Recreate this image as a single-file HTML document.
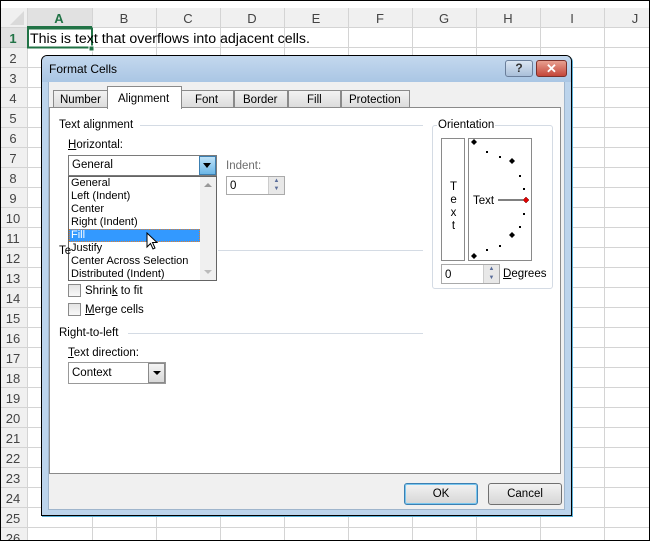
<!DOCTYPE html>
<html><head><style>
*{box-sizing:border-box;margin:0;padding:0}
body{width:650px;height:541px;overflow:hidden;background:#fff;font-family:"Liberation Sans",sans-serif;position:relative}
.a{position:absolute}
.t{position:absolute;font-size:11.5px;color:#000;white-space:nowrap;line-height:14px}
.hl{position:absolute;height:1px;background:#d4dbe4}
</style></head><body>
<div class="a" style="left:0;top:0;width:650px;height:541px;border:1px solid #000;z-index:50;pointer-events:none"></div>
<svg class="a" style="left:0;top:0" width="650" height="541">
<rect x="0" y="8" width="650" height="20" fill="#f0f0f0"/>
<rect x="0" y="8" width="27" height="533" fill="#f0f0f0"/>
<rect x="27" y="8" width="65" height="20" fill="#e1e1e1"/>
<rect x="0" y="28" width="27" height="20" fill="#e1e1e1"/>
<polygon points="10,25 24,25 24,11" fill="#dadada"/>
<g stroke="#d4d4d4" stroke-width="1">
<line x1="27.5" y1="8" x2="27.5" y2="541"/>
<line x1="92.5" y1="8" x2="92.5" y2="541"/><line x1="156.5" y1="8" x2="156.5" y2="541"/><line x1="220.5" y1="8" x2="220.5" y2="541"/><line x1="284.5" y1="8" x2="284.5" y2="541"/><line x1="348.5" y1="8" x2="348.5" y2="541"/><line x1="412.5" y1="8" x2="412.5" y2="541"/><line x1="476.5" y1="8" x2="476.5" y2="541"/><line x1="540.5" y1="8" x2="540.5" y2="541"/><line x1="604.5" y1="8" x2="604.5" y2="541"/>
<line x1="0" y1="27.5" x2="650" y2="27.5"/>
<line x1="0" y1="47.5" x2="650" y2="47.5"/><line x1="0" y1="67.5" x2="650" y2="67.5"/><line x1="0" y1="87.5" x2="650" y2="87.5"/><line x1="0" y1="107.5" x2="650" y2="107.5"/><line x1="0" y1="127.5" x2="650" y2="127.5"/><line x1="0" y1="147.5" x2="650" y2="147.5"/><line x1="0" y1="167.5" x2="650" y2="167.5"/><line x1="0" y1="187.5" x2="650" y2="187.5"/><line x1="0" y1="207.5" x2="650" y2="207.5"/><line x1="0" y1="227.5" x2="650" y2="227.5"/><line x1="0" y1="247.5" x2="650" y2="247.5"/><line x1="0" y1="267.5" x2="650" y2="267.5"/><line x1="0" y1="287.5" x2="650" y2="287.5"/><line x1="0" y1="307.5" x2="650" y2="307.5"/><line x1="0" y1="327.5" x2="650" y2="327.5"/><line x1="0" y1="347.5" x2="650" y2="347.5"/><line x1="0" y1="367.5" x2="650" y2="367.5"/><line x1="0" y1="387.5" x2="650" y2="387.5"/><line x1="0" y1="407.5" x2="650" y2="407.5"/><line x1="0" y1="427.5" x2="650" y2="427.5"/><line x1="0" y1="447.5" x2="650" y2="447.5"/><line x1="0" y1="467.5" x2="650" y2="467.5"/><line x1="0" y1="487.5" x2="650" y2="487.5"/><line x1="0" y1="507.5" x2="650" y2="507.5"/><line x1="0" y1="527.5" x2="650" y2="527.5"/>
</g>
<line x1="27" y1="27" x2="92" y2="27" stroke="#217346" stroke-width="2"/>
<rect x="28" y="28.5" width="64" height="19" fill="none" stroke="#217346" stroke-width="2"/>
<rect x="89" y="46" width="5" height="5" fill="#217346" stroke="#fff"/>
<g font-family="Liberation Sans" font-size="13" fill="#444" text-anchor="middle">
<text x="59" y="23" fill="#217346" font-weight="bold">A</text><text x="124" y="23">B</text><text x="188" y="23">C</text><text x="252" y="23">D</text><text x="316" y="23">E</text><text x="380" y="23">F</text><text x="444" y="23">G</text><text x="508" y="23">H</text><text x="572" y="23">I</text><text x="635" y="23">J</text>
</g>
<g font-family="Liberation Sans" font-size="13" fill="#444" text-anchor="middle">
<text x="13" y="43" fill="#217346" font-weight="bold">1</text><text x="13" y="63">2</text><text x="13" y="83">3</text><text x="13" y="103">4</text><text x="13" y="123">5</text><text x="13" y="143">6</text><text x="13" y="163">7</text><text x="13" y="183">8</text><text x="13" y="203">9</text><text x="13" y="223">10</text><text x="13" y="243">11</text><text x="13" y="263">12</text><text x="13" y="283">13</text><text x="13" y="303">14</text><text x="13" y="323">15</text><text x="13" y="343">16</text><text x="13" y="363">17</text><text x="13" y="383">18</text><text x="13" y="403">19</text><text x="13" y="423">20</text><text x="13" y="443">21</text><text x="13" y="463">22</text><text x="13" y="483">23</text><text x="13" y="503">24</text><text x="13" y="523">25</text><text x="13" y="543">26</text>
</g>
<text x="30" y="43" font-family="Liberation Sans" font-size="14.2" fill="#000">This is text that overflows into adjacent cells.</text>
</svg>

<div class="a" style="left:41px;top:55px;width:531px;height:461px;background:#bcd4ec;border:1px solid #000;border-radius:6px 6px 0 0;box-shadow:1px 1px 0 #5ab0d8"></div>
<div class="a" style="left:42px;top:56px;width:529px;height:26px;background:linear-gradient(#c4d8ee,#aac6e4);border-radius:5px 5px 0 0"></div>
<div class="t" style="left:49px;top:62px;font-size:12px">Format Cells</div>
<div class="a" style="left:505px;top:60px;width:28px;height:17px;border:1px solid #6a7e9a;border-radius:3px;background:linear-gradient(#dbe6f3,#a9bfd9);font-size:12px;text-align:center;line-height:15px;color:#333;font-weight:bold">?</div>
<div class="a" style="left:536px;top:60px;width:31px;height:17px;border:1px solid #7b302a;border-radius:3px;background:linear-gradient(#e8a090,#c4463a);font-size:13px;text-align:center;line-height:15px;color:#fff;font-weight:bold">✕</div>
<div class="a" style="left:48px;top:82px;width:517px;height:428px;background:#f0f0f0;border:1px solid #9fb5cc;border-top:none"></div>

<div class="a" style="left:53px;top:90px;width:56px;height:18px;border:1px solid #8a8a8a;background:linear-gradient(#f2f2f2,#dcdcdc)"></div><div class="t" style="left:60px;top:93px">Number</div>
<div class="a" style="left:181px;top:90px;width:53px;height:18px;border:1px solid #8a8a8a;background:linear-gradient(#f2f2f2,#dcdcdc)"></div><div class="t" style="left:195px;top:93px">Font</div>
<div class="a" style="left:234px;top:90px;width:54px;height:18px;border:1px solid #8a8a8a;background:linear-gradient(#f2f2f2,#dcdcdc)"></div><div class="t" style="left:243px;top:93px">Border</div>
<div class="a" style="left:288px;top:90px;width:53px;height:18px;border:1px solid #8a8a8a;background:linear-gradient(#f2f2f2,#dcdcdc)"></div><div class="t" style="left:307px;top:93px">Fill</div>
<div class="a" style="left:341px;top:90px;width:69px;height:18px;border:1px solid #8a8a8a;background:linear-gradient(#f2f2f2,#dcdcdc)"></div><div class="t" style="left:349px;top:93px">Protection</div>
<div class="a" style="left:49px;top:107px;width:512px;height:367px;background:#fff;border:1px solid #8a8a8a"></div>
<div class="a" style="left:107px;top:86px;width:75px;height:23px;border:1px solid #8a8a8a;border-bottom:none;background:#fff"></div><div class="t" style="left:118px;top:92px">Alignment</div>

<div class="t" style="left:59px;top:118px">Text alignment</div><div class="hl" style="left:140px;top:125px;width:283px"></div>
<div class="t" style="left:68px;top:138px"><u>H</u>orizontal:</div>
<div class="a" style="left:68px;top:155px;width:149px;height:21px;border:1px solid #7a7a7a;background:#fff"></div>
<div class="t" style="left:72px;top:158px">General</div>
<div class="a" style="left:199px;top:156px;width:17px;height:19px;background:linear-gradient(#bfe2f8,#6cb6e6);border:1px solid #3c7fb1"></div>
<div class="a" style="left:203px;top:163px;width:0;height:0;border-left:4px solid transparent;border-right:4px solid transparent;border-top:5px solid #000"></div>
<div class="t" style="left:226px;top:159px;color:#6d6d6d">Indent:</div>
<div class="a" style="left:226px;top:176px;width:59px;height:19px;border:1px solid #aaa;background:#fff"></div>
<div class="t" style="left:230px;top:179px">0</div>
<div class="a" style="left:268px;top:177px;width:16px;height:17px;background:#e8e8e8;border-left:1px solid #ccc;font-size:6px;color:#5a6d9a;text-align:center;line-height:8px">▲<br>▼</div>

<div class="a" style="left:68px;top:176px;width:149px;height:105px;border:1px solid #646464;background:#fff"></div>
<div class="a" style="left:200px;top:177px;width:16px;height:103px;background:#f0f0f0"></div>
<div class="a" style="left:204px;top:183px;width:0;height:0;border-left:4px solid transparent;border-right:4px solid transparent;border-bottom:4px solid #999"></div>
<div class="a" style="left:204px;top:270px;width:0;height:0;border-left:4px solid transparent;border-right:4px solid transparent;border-top:4px solid #bbb"></div>
<div class="a" style="left:69px;top:229px;width:131px;height:13px;background:#3399ff;border:1px dotted #e08030"></div>
<div class="t" style="left:71px;top:177px;line-height:13px;font-size:11px">General<br>Left (Indent)<br>Center<br>Right (Indent)<br><span style="color:#fff">Fill</span><br>Justify<br>Center Across Selection<br>Distributed (Indent)</div>
<svg class="a" style="left:146px;top:232px" width="14" height="20"><path d="M1,1 L1,15 L4.5,11.5 L7,17 L9,16 L6.5,10.5 L11,10.5 Z" fill="#fff" stroke="#000" stroke-width="1"/></svg>

<div class="t" style="left:59px;top:244px">Te</div><div class="hl" style="left:218px;top:250px;width:205px"></div>
<div class="a" style="left:68px;top:284px;width:13px;height:13px;border:1px solid #8a8a8a;background:linear-gradient(#e4e4e4,#f8f8f8)"></div>
<div class="t" style="left:85px;top:284px">Shrin<u>k</u> to fit</div>
<div class="a" style="left:68px;top:303px;width:13px;height:13px;border:1px solid #8a8a8a;background:linear-gradient(#e4e4e4,#f8f8f8)"></div>
<div class="t" style="left:85px;top:303px"><u>M</u>erge cells</div>

<div class="t" style="left:59px;top:326px">Right-to-left</div><div class="hl" style="left:128px;top:333px;width:295px"></div>
<div class="t" style="left:68px;top:346px"><u>T</u>ext direction:</div>
<div class="a" style="left:68px;top:362px;width:98px;height:22px;border:1px solid #999;background:#fff"></div>
<div class="t" style="left:72px;top:366px">Context</div>
<div class="a" style="left:148px;top:363px;width:17px;height:20px;background:linear-gradient(#f4f4f4,#d8d8d8);border:1px solid #8a8a8a"></div>
<div class="a" style="left:153px;top:371px;width:0;height:0;border-left:4px solid transparent;border-right:4px solid transparent;border-top:4px solid #000"></div>

<div class="a" style="left:432px;top:125px;width:121px;height:164px;border:1px solid #d4dbe4;border-radius:3px"></div>
<div class="t" style="left:437px;top:118px;background:#fff;padding:0 1px">Orientation</div>
<div class="a" style="left:441px;top:138px;width:24px;height:123px;border:1px solid #8a8a8a"></div>
<div class="t" style="left:450px;top:181px;line-height:13px;text-align:center">T<br>e<br>x<br>t</div>
<div class="a" style="left:468px;top:138px;width:64px;height:123px;border:1px solid #8a8a8a"></div>
<svg class="a" style="left:468px;top:138px" width="64" height="123">
<g fill="#000">
<path d="M6,1 l3,3 -3,3 -3,-3z"/><path d="M44,20 l3,3 -3,3 -3,-3z"/><path d="M44,94 l3,3 -3,3 -3,-3z"/><path d="M6,115 l3,3 -3,3 -3,-3z"/>
<rect x="18" y="13" width="2" height="2"/><rect x="31" y="18" width="2" height="2"/><rect x="51" y="37" width="2" height="2"/><rect x="55" y="50" width="2" height="2"/>
<rect x="55" y="75" width="2" height="2"/><rect x="51" y="88" width="2" height="2"/><rect x="31" y="107" width="2" height="2"/><rect x="18" y="111" width="2" height="2"/>
</g>
<path d="M58,59 l3,3 -3,3 -3,-3z" fill="#e00000" stroke="#600" stroke-width="0.5"/>
<line x1="30" y1="62" x2="55" y2="62" stroke="#000"/>
<text x="5" y="66" font-family="Liberation Sans" font-size="11.5">Text</text>
</svg>
<div class="a" style="left:441px;top:264px;width:59px;height:20px;border:1px solid #aaa;background:#fff"></div>
<div class="t" style="left:445px;top:268px">0</div>
<div class="a" style="left:483px;top:265px;width:16px;height:18px;background:#e8e8e8;border-left:1px solid #ccc;font-size:6px;color:#5a6d9a;text-align:center;line-height:9px">▲<br>▼</div>
<div class="t" style="left:503px;top:267px"><u>D</u>egrees</div>

<div class="a" style="left:404px;top:483px;width:74px;height:22px;border:1px solid #3c7fb1;border-radius:3px;background:linear-gradient(#f2f2f2,#d6d6d6);box-shadow:inset 0 0 0 1px #78c6ef;font-size:11.5px;text-align:center;line-height:20px">OK</div>
<div class="a" style="left:488px;top:483px;width:74px;height:22px;border:1px solid #707070;border-radius:3px;background:linear-gradient(#f2f2f2,#d6d6d6);font-size:11.5px;text-align:center;line-height:20px">Cancel</div>
</body></html>
